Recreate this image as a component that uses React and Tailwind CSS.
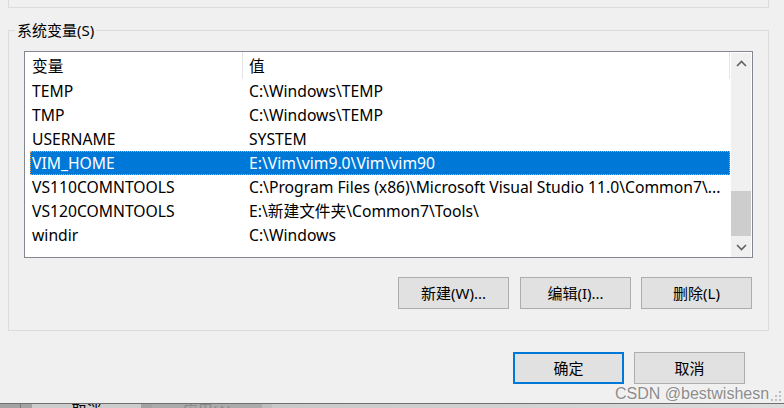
import React from "react";

const FONT = { fontFamily: '"Noto Sans", "Noto Sans CJK SC", sans-serif' };

const rows = [
  ["TEMP", "C:\\Windows\\TEMP"],
  ["TMP", "C:\\Windows\\TEMP"],
  ["USERNAME", "SYSTEM"],
  ["VIM_HOME", "E:\\Vim\\vim9.0\\Vim\\vim90"],
  ["VS110COMNTOOLS", "C:\\Program Files (x86)\\Microsoft Visual Studio 11.0\\Common7\\..."],
  ["VS120COMNTOOLS", "E:\\新建文件夹\\Common7\\Tools\\"],
  ["windir", "C:\\Windows"],
];

function Chevron({ up }) {
  return (
    <svg width="11" height="7" viewBox="0 0 11 7">
      <path
        d={up ? "M1 6 L5.5 1.5 L10 6" : "M1 1 L5.5 5.5 L10 1"}
        fill="none"
        stroke="#606060"
        strokeWidth="1.6"
      />
    </svg>
  );
}

function Btn({ children, primary }) {
  return (
    <div
      className={
        "w-[111px] h-[32px] flex items-center justify-center bg-[#e1e1e1] text-[15px] text-black " +
        (primary ? "border-2 border-[#0078d7]" : "border border-[#adadad]")
      }
    >
      {children}
    </div>
  );
}

export default function App() {
  return (
    <div
      className="relative w-[784px] h-[408px] overflow-hidden bg-[#f0f0f0] flex flex-col"
      style={FONT}
    >
      <div className="h-[403px] flex flex-col">
        {/* tail of the user variables group */}
        <div className="ml-[8px] w-[761px] h-[8px] border-x border-b border-[#dcdcdc]" />

        {/* system variables group */}
        <div className="relative mt-[22px] ml-[8px] w-[761px] h-[301px] border border-[#dcdcdc] flex flex-col">
          <div className="absolute left-[6px] top-[-11px] px-[2px] h-[20px] leading-[20px] bg-[#f0f0f0] text-[15px] text-black">
            系统变量(S)
          </div>

          <div className="mt-[20px] ml-[15px] w-[729px] h-[207px] border border-[#828790] bg-white flex">
            <div className="w-[706px] flex flex-col">
              <div className="h-[27px] flex text-[15.7px] text-black">
                <div className="w-[218px] pl-[7px] pt-[3px] flex items-center border-r border-[#e5e5e5]">变量</div>
                <div className="w-[487px] pl-[6px] pt-[3px] flex items-center border-r border-[#e5e5e5]">值</div>
              </div>
              <div className="ml-[5px] w-[700px] flex flex-col text-[15.7px]">
                {rows.map(([k, v]) => {
                  const sel = k === "VIM_HOME";
                  return (
                    <div
                      key={k}
                      className={
                        "h-[24px] pt-[2px] flex items-center whitespace-nowrap " +
                        (sel
                          ? "bg-[#0078d7] text-white outline outline-1 outline-dotted outline-[#e9a35c] -outline-offset-1"
                          : "text-black")
                      }
                    >
                      <div className="w-[213px] pl-[2px]">{k}</div>
                      <div className="flex-1 pl-[6px] overflow-hidden">{v}</div>
                    </div>
                  );
                })}
              </div>
            </div>

            {/* vertical scrollbar */}
            <div className="mt-[1px] w-[20px] h-[204px] bg-[#f0f0f0] flex flex-col">
              <div className="h-[20px] flex items-center justify-center">
                <Chevron up />
              </div>
              <div className="h-[118px]" />
              <div className="h-[45px] bg-[#cdcdcd]" />
              <div className="h-[1px]" />
              <div className="h-[20px] flex items-center justify-center">
                <Chevron />
              </div>
            </div>
          </div>

          <div className="mt-[19px] mr-[16px] flex justify-end">
            <Btn>新建(W)...</Btn>
            <div className="w-[11px]" />
            <Btn>编辑(I)...</Btn>
            <div className="w-[10px]" />
            <Btn>删除(L)</Btn>
          </div>
        </div>

        <div className="mt-[21px] mr-[39px] flex justify-end gap-[10px]">
          <Btn primary>确定</Btn>
          <Btn>取消</Btn>
        </div>
      </div>

      {/* dialog edge and the window behind it */}
      <div className="h-[1px] bg-[#707070]" />
      <div className="h-[4px] flex overflow-hidden text-[15px] leading-[15px]">
        <div className="w-[20px] bg-[#a3a3a3]" />
        <div className="w-[1px] bg-[#7a7a7a]" />
        <div className="w-[11px] bg-[#a3a3a3]" />
        <div className="w-[109px] bg-[#cccccc] flex justify-center text-black">
          <span className="-mt-[1px]">取消</span>
        </div>
        <div className="w-[11px] bg-[#a3a3a3]" />
        <div className="w-[110px] bg-[#ababab] flex justify-center text-[#8a8a8a]">
          <span className="-mt-[1px]">应用(A)</span>
        </div>
        <div className="w-[10px] bg-[#bdbdbd]" />
        <div className="flex-1 bg-gradient-to-r from-[#c8c8c8] to-[#dcdcdc]" />
      </div>

      {/* watermark */}
      <div
        className="absolute left-[615px] top-[386px] text-[16px] leading-[16px] text-[#8c8c8c] whitespace-nowrap"
        style={{ fontFamily: '"Liberation Sans", Arial, sans-serif', textShadow: "0 0 2px #ffffff" }}
      >
        CSDN @bestwishesn
      </div>

      {/* size grip */}
      <svg className="absolute left-[770px] top-[390px]" width="12" height="12" viewBox="0 0 12 12">
        <g fill="#bdbdbd">
          <rect x="9" y="1" width="2" height="2" />
          <rect x="5" y="5" width="2" height="2" />
          <rect x="9" y="5" width="2" height="2" />
          <rect x="1" y="9" width="2" height="2" />
          <rect x="5" y="9" width="2" height="2" />
          <rect x="9" y="9" width="2" height="2" />
        </g>
      </svg>
    </div>
  );
}
